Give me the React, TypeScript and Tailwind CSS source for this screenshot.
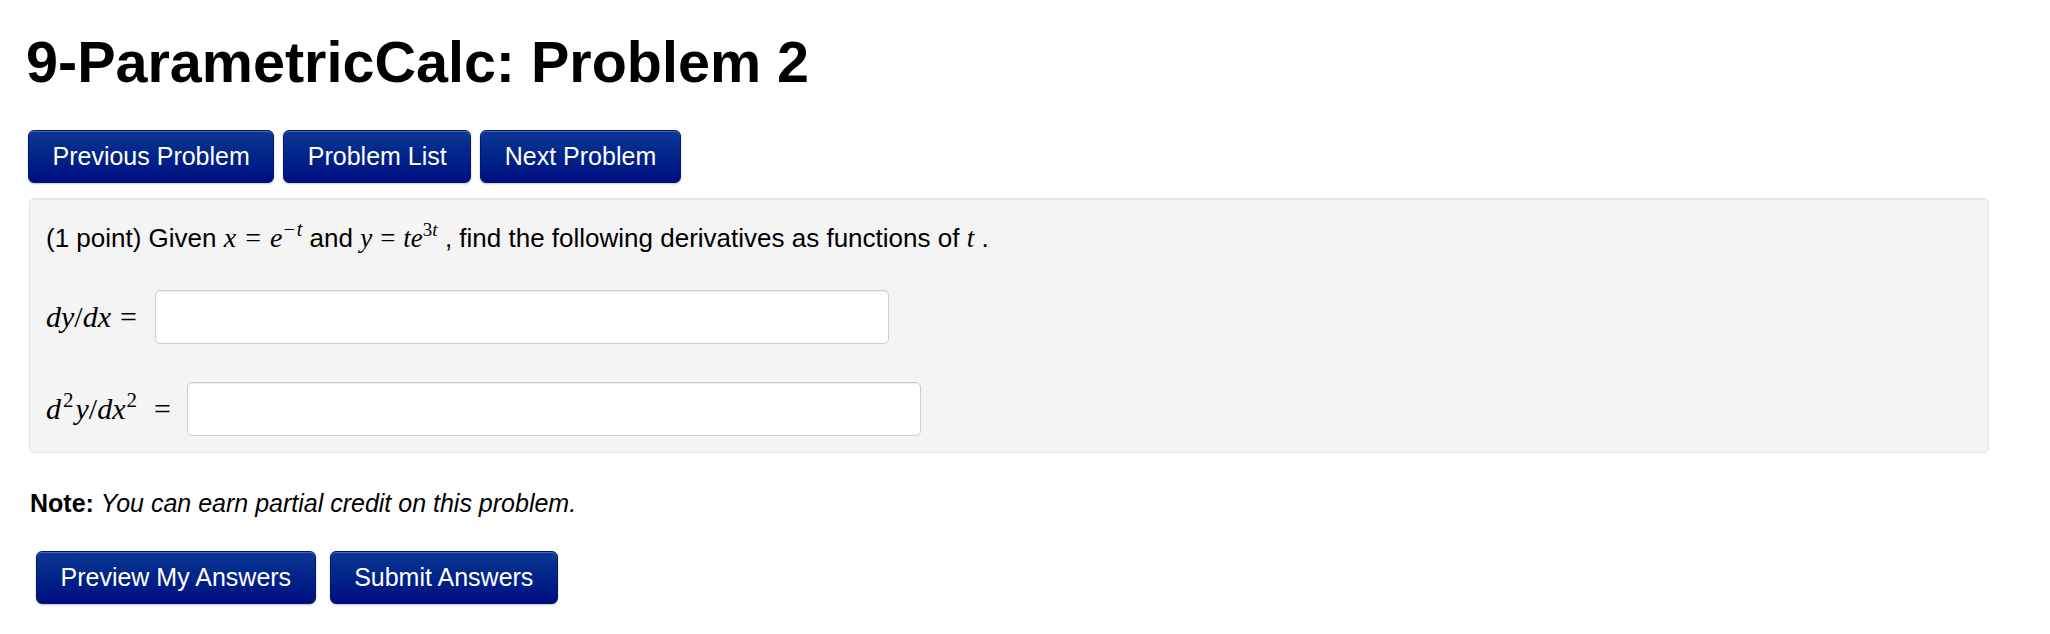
import React from 'react';

const btn =
  "h-[53px] px-[23.5px] rounded-[6px] border border-[#001a6e] bg-linear-to-b from-[#0d3693] to-[#000a80] text-white text-[25px] leading-none shadow-[inset_0_1px_0_rgba(255,255,255,0.25),0_1px_2px_rgba(0,0,0,0.25)]";

const input =
  "h-[54px] w-[734px] rounded-[5px] border border-[#cccccc] bg-white shadow-[inset_0_1px_1px_rgba(0,0,0,0.075)]";

function Mi({ children }: { children: React.ReactNode }) {
  return <span className="italic">{children}</span>;
}

export default function App() {
  return (
    <div className="min-h-screen bg-white text-black font-['Liberation_Sans',Arial,Helvetica,sans-serif]">
      <div className="pl-[28px] pt-[34px]">
        <h1 className="ml-[-2px] text-[57.5px] leading-[57px] font-bold">9-ParametricCalc: Problem 2</h1>

        <div className="mt-[39px] flex gap-[9px]">
          <button className={btn}>Previous Problem</button>
          <button className={btn}>Problem List</button>
          <button className={btn}>Next Problem</button>
        </div>

        <div className="mt-[15px] ml-[1px] w-[1960px] rounded-[5px] border border-[#e3e3e3] bg-[#f4f4f4] pl-[16px] pt-[21px] pb-[16px] shadow-[inset_0_1px_1px_rgba(0,0,0,0.05)]">
          <p className="text-[26px] leading-[36px]">
            (1 point) Given{' '}
            <span className="font-['Liberation_Serif','Times_New_Roman',serif] text-[28px]">
              <Mi>x</Mi>
              <span className="mx-[9px]">=</span>
              <Mi>e</Mi>
              <sup className="top-[-11px] ml-[1px] text-[20px]">
                <span className="mr-[2px]">−</span>
                <Mi>t</Mi>
              </sup>
            </span>{' '}
            and{' '}
            <span className="font-['Liberation_Serif','Times_New_Roman',serif] text-[27px]">
              <Mi>y</Mi>
              <span className="mx-[8px]">=</span>
              <Mi>te</Mi>
              <sup className="top-[-11px] text-[19px]">
                3<Mi>t</Mi>
              </sup>
            </span>{' '}
            , find the following derivatives as functions of{' '}
            <span className="font-['Liberation_Serif','Times_New_Roman',serif] text-[27px]">
              <Mi>t</Mi>
            </span>{' '}
            .
          </p>

          <div className="mt-[34px] flex items-center">
            <span className="font-['Liberation_Serif','Times_New_Roman',serif] text-[30px] leading-none">
              <Mi>dy</Mi>/<Mi>dx</Mi>
              <span className="ml-[9px]">=</span>
            </span>
            <input className={`${input} ml-[18px]`} />
          </div>

          <div className="mt-[38px] flex items-center">
            <span className="font-['Liberation_Serif','Times_New_Roman',serif] text-[30px] leading-none">
              <Mi>d</Mi>
              <sup className="top-[-12px] ml-[2px] mr-[2px] text-[21px]">2</sup>
              <Mi>y</Mi>/<Mi>dx</Mi>
              <sup className="top-[-12px] ml-[1px] text-[21px]">2</sup>
              <span className="ml-[17px]">=</span>
            </span>
            <input className={`${input} ml-[16px]`} />
          </div>
        </div>

        <p className="mt-[32px] ml-[2px] text-[25px] leading-[36px]">
          <span className="font-bold">Note:</span> <span className="italic">You can earn partial credit on this problem.</span>
        </p>

        <div className="mt-[30px] ml-[8px] flex gap-[14px] pb-[30px]">
          <button className={btn}>Preview My Answers</button>
          <button className={btn}>Submit Answers</button>
        </div>
      </div>
    </div>
  );
}
